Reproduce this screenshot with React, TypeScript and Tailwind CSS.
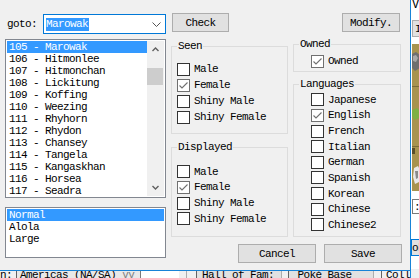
import type { ReactNode } from "react";

const pokemon = [
  "105 - Marowak",
  "106 - Hitmonlee",
  "107 - Hitmonchan",
  "108 - Lickitung",
  "109 - Koffing",
  "110 - Weezing",
  "111 - Rhyhorn",
  "112 - Rhydon",
  "113 - Chansey",
  "114 - Tangela",
  "115 - Kangaskhan",
  "116 - Horsea",
  "117 - Seadra",
];

const forms = ["Normal", "Alola", "Large"];

const languages: [string, boolean][] = [
  ["Japanese", false],
  ["English", true],
  ["French", false],
  ["Italian", false],
  ["German", false],
  ["Spanish", false],
  ["Korean", false],
  ["Chinese", false],
  ["Chinese2", false],
];

const genders: [string, boolean][] = [
  ["Male", false],
  ["Female", true],
  ["Shiny Male", false],
  ["Shiny Female", false],
];

function Btn({ className, children }: { className: string; children: ReactNode }) {
  return (
    <div className={`h-[19px] border border-[#adadad] bg-[#e1e1e1] flex items-center justify-center ${className}`}>
      {children}
    </div>
  );
}

function Box({ checked }: { checked: boolean }) {
  return (
    <span
      className={`w-[13px] h-[13px] shrink-0 border bg-white flex items-center justify-center ${
        checked ? "border-[#707070]" : "border-[#333333]"
      }`}
    >
      {checked && (
        <svg width="11" height="11" viewBox="0 0 11 11">
          <path d="M1.5 5.5 L4 8 L9.5 2.5" fill="none" stroke="#707070" strokeWidth="1.1" />
        </svg>
      )}
    </span>
  );
}

function Check({ label, checked, h }: { label: string; checked: boolean; h: string }) {
  return (
    <div className={`flex items-center gap-[4px] ${h}`}>
      <Box checked={checked} />
      <span className="whitespace-nowrap">{label}</span>
    </div>
  );
}

function Group({ title, className, children }: { title: string; className: string; children: ReactNode }) {
  return (
    <fieldset className={`border border-[#dcdcdc] ${className}`}>
      <legend className="ml-[5px] px-[1px] leading-[12px]">{title}</legend>
      {children}
    </fieldset>
  );
}

function Chevron({ up }: { up?: boolean }) {
  return (
    <svg width="7" height="5" viewBox="0 0 7 5">
      <polyline
        points={up ? "0.5,4 3.5,1 6.5,4" : "0.5,1 3.5,4 6.5,1"}
        fill="none"
        stroke="#606060"
        strokeWidth="1.4"
      />
    </svg>
  );
}

export default function App() {
  return (
    <div className="w-[419px] h-[278px] overflow-hidden flex bg-white text-black font-['Liberation_Mono',monospace] text-[11px] tracking-[-0.6px] leading-[12px]">
      <div className="w-[410px] flex flex-col">
        {/* dialog */}
        <div className="h-[271px] border-b border-[#1883d7] bg-[#f0f0f0] flex pl-[5px] gap-[5px]">
          {/* left column */}
          <div className="w-[161px] flex flex-col pt-[14px]">
            <div className="h-[20px] flex items-center">
              <span className="w-[38px] pl-[2px]">goto:</span>
              <div className="flex-1 h-[20px] border border-[#0078d7] bg-white flex items-center justify-between pl-[2px] pr-[4px]">
                <span className="bg-[#3399ff] text-white h-[13px] leading-[13px] pr-[1px]">Marowak</span>
                <svg width="9" height="5" viewBox="0 0 9 5">
                  <polyline points="0.5,0.5 4.5,4.5 8.5,0.5" fill="none" stroke="#555555" strokeWidth="1" />
                </svg>
              </div>
            </div>

            <div className="mt-[5px] h-[159px] border border-[#828790] bg-white p-[1px] flex">
              <div className="flex-1 overflow-hidden">
                {pokemon.map((p, i) => (
                  <div
                    key={p}
                    className={`h-[12px] pl-[2px] whitespace-nowrap ${i === 0 ? "bg-[#3399ff] text-white" : ""}`}
                  >
                    {p}
                  </div>
                ))}
              </div>
              <div className="w-[17px] flex flex-col bg-[#f0f0f0]">
                <div className="h-[17px] flex items-center justify-center">
                  <Chevron up />
                </div>
                <div className="flex-1 pt-[10px]">
                  <div className="h-[17px] mr-[1px] bg-[#cdcdcd]" />
                </div>
                <div className="h-[17px] flex items-center justify-center">
                  <Chevron />
                </div>
              </div>
            </div>

            <div className="mt-[9px] h-[51px] border border-[#828790] bg-white p-[1px]">
              {forms.map((f, i) => (
                <div key={f} className={`h-[12px] pl-[2px] ${i === 0 ? "bg-[#3399ff] text-white" : ""}`}>
                  {f}
                </div>
              ))}
            </div>
          </div>

          {/* right part */}
          <div className="w-[231px] flex flex-col">
            <div className="flex gap-[5px]">
              <div className="w-[117px] flex flex-col pt-[13px]">
                <Btn className="ml-[1px] w-[57px]">Check</Btn>
                <Group title="Seen" className="mt-[8px] h-[94px]">
                  <div className="mt-[9px] pl-[5px] flex flex-col">
                    {genders.map(([g, c]) => (
                      <Check key={g} label={g} checked={c} h="h-[16px]" />
                    ))}
                  </div>
                </Group>
                <Group title="Displayed" className="mt-[7px] h-[96px]">
                  <div className="mt-[11px] pl-[5px] flex flex-col">
                    {genders.map(([g, c]) => (
                      <Check key={g} label={g} checked={c} h="h-[15.625px]" />
                    ))}
                  </div>
                </Group>
              </div>

              <div className="w-[108px] flex flex-col pt-[13px]">
                <Btn className="self-end mr-[1px] w-[58px]">Modify.</Btn>
                <Group title="Owned" className="mt-[6px] h-[34px]">
                  <div className="mt-[3px] pl-[17px]">
                    <Check label="Owned" checked h="h-[16px]" />
                  </div>
                </Group>
                <Group title="Languages" className="mt-[6px] h-[159px]">
                  <div className="mt-[2px] pl-[17px] flex flex-col">
                    {languages.map(([l, c]) => (
                      <Check key={l} label={l} checked={c} h="h-[15.625px]" />
                    ))}
                  </div>
                </Group>
              </div>
            </div>

            <div className="mt-[7px] flex justify-end gap-[8px]">
              <Btn className="w-[78px]">Cancel</Btn>
              <Btn className="w-[78px]">Save</Btn>
            </div>
          </div>
        </div>

        {/* main window tabs peeking below */}
        <div className="h-[7px] overflow-hidden flex items-start bg-[#f0f0f0] whitespace-nowrap">
          <div className="w-[16px] -mt-[2px] overflow-hidden">n:</div>
          <div className="w-[126px] h-full border-l border-r border-l-[#646464] border-r-[#7a7a7a] bg-[#e8e8e8] flex justify-between pl-[3px] pr-[6px]">
            <span className="-mt-[2px]">Americas (NA/SA)</span>
            <span className="-mt-[2px] text-[#808080]">vv</span>
          </div>
          <div className="w-[38px] h-full bg-white" />
          <div className="w-[17px] h-full flex">
            <div className="w-[7px]" />
            <div className="w-[1px] bg-[#adadad]" />
            <div className="w-[9px]" />
          </div>
          <div className="w-[86px] h-full border-l border-r border-l-[#646464] border-r-[#adadad] bg-[#e1e1e1] pl-[5px]">
            <div className="-mt-[2px]">Hall of Fam:</div>
          </div>
          <div className="w-[7px]" />
          <div className="w-[86px] h-full border-l border-r border-l-[#646464] border-r-[#adadad] bg-[#e1e1e1] pl-[8px]">
            <div className="-mt-[2px]">Poké Base</div>
          </div>
          <div className="w-[7px]" />
          <div className="flex-1 h-full border-l border-[#646464] pl-[4px]">
            <div className="-mt-[2px]">Coll</div>
          </div>
        </div>
      </div>

      {/* main window content at the right edge */}
      <div className="flex-1 border-l border-[#1883d7] flex flex-col overflow-hidden">
        <div className="h-[10px] pl-[1px] -mt-[1px] text-[12px]">V</div>
        <div className="h-[11px]" />
        <div className="h-[17px] ml-[1px] border border-r-0 border-[#adadad] bg-[#e1e1e1] pl-[2px] flex items-center">
          I
        </div>
        <div className="h-[7px]" />
        <div className="h-[147px] ml-[1px]">
          <svg width="8" height="147" viewBox="0 0 8 147">
            <rect width="8" height="147" fill="#a8934f" />
            <rect y="42" width="8" height="1" fill="#7c6c38" />
            <rect y="102" width="8" height="1" fill="#7c6c38" />
            <path d="M0 10 L4 8 L8 11 L8 24 L3 27 L0 24 Z" fill="#6f6f6f" />
            <path d="M1 12 L4 11 L6 14 L4 18 L1 17 Z" fill="#a9a9a9" />
            <path d="M0 66 L5 64 L8 67 L8 74 L2 76 L0 72 Z" fill="#7fb043" />
            <rect x="0" y="104" width="3" height="6" fill="#5a4e2a" />
            <path d="M2 124 L6 122 L8 126 L7 138 L3 140 L1 133 Z" fill="#e8e8e8" />
            <path d="M3 127 L6 127 L6 134 L4 135 Z" fill="#8a8a8a" />
          </svg>
        </div>
        <div className="h-[8px]" />
        <div className="h-[15px] ml-[1px] border border-r-0 border-[#7a7a7a] bg-white pl-[1px] flex items-center">:</div>
        <div className="h-[25px]" />
        <div className="h-[17px] border border-r-0 border-[#0078d7] bg-[#e1e1e1] flex items-center">ok</div>
        <div className="h-[13px]" />
        <div className="flex-1 bg-[#f0f0f0]" />
      </div>
    </div>
  );
}
